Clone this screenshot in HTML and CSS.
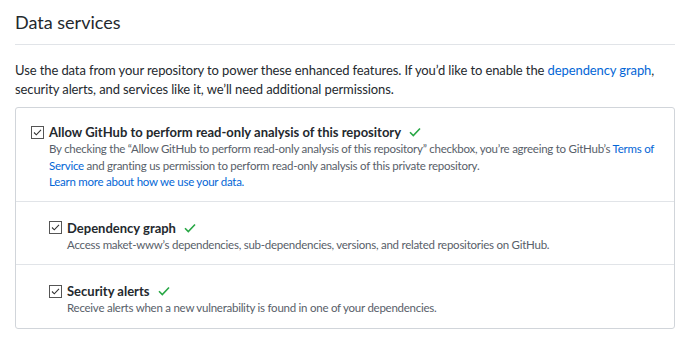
FILE: index.html
```html
<!DOCTYPE html>
<html>
<head>
<meta charset="utf-8">
<link rel="stylesheet" href="styles.css">
</head>
<body>
<div class="page">
  <h2 class="title">Data services</h2>
  <p class="intro">Use the data from your repository to power these enhanced features. If you’d like to enable the <a href="#">dependency graph</a>, security alerts, and services like it, we’ll need additional permissions.</p>
  <div class="box">
    <div class="row">
      <div class="head">
        <span class="cb"><svg width="13" height="13" viewBox="0 0 13 13"><rect x="0.5" y="0.5" width="12" height="12" fill="#fff" stroke="#555"/><path d="M3 6.5 L5.3 8.8 L10 3.8" fill="none" stroke="#333" stroke-width="1.1"/></svg></span>
        <span class="label">Allow GitHub to perform read-only analysis of this repository</span>
        <svg class="ok" width="12" height="10" viewBox="0 0 12 10"><path d="M1 5.2 L4.3 8.5 L11 1.5" fill="none" stroke="#28a745" stroke-width="1.6"/></svg>
      </div>
      <p class="desc">By checking the “Allow GitHub to perform read-only analysis of this repository” checkbox, you’re agreeing to GitHub’s <a href="#">Terms of Service</a> and granting us permission to perform read-only analysis of this private repository.<br><a href="#">Learn more about how we use your data.</a></p>
    </div>
    <div class="row sub">
      <div class="head">
        <span class="cb"><svg width="13" height="13" viewBox="0 0 13 13"><rect x="0.5" y="0.5" width="12" height="12" fill="#fff" stroke="#555"/><path d="M3 6.5 L5.3 8.8 L10 3.8" fill="none" stroke="#333" stroke-width="1.1"/></svg></span>
        <span class="label">Dependency graph</span>
        <svg class="ok" width="12" height="10" viewBox="0 0 12 10"><path d="M1 5.2 L4.3 8.5 L11 1.5" fill="none" stroke="#28a745" stroke-width="1.6"/></svg>
      </div>
      <p class="desc">Access maket-www’s dependencies, sub-dependencies, versions, and related repositories on GitHub.</p>
    </div>
    <div class="row sub">
      <div class="head">
        <span class="cb"><svg width="13" height="13" viewBox="0 0 13 13"><rect x="0.5" y="0.5" width="12" height="12" fill="#fff" stroke="#555"/><path d="M3 6.5 L5.3 8.8 L10 3.8" fill="none" stroke="#333" stroke-width="1.1"/></svg></span>
        <span class="label">Security alerts</span>
        <svg class="ok" width="12" height="10" viewBox="0 0 12 10"><path d="M1 5.2 L4.3 8.5 L11 1.5" fill="none" stroke="#28a745" stroke-width="1.6"/></svg>
      </div>
      <p class="desc">Receive alerts when a new vulnerability is found in one of your dependencies.</p>
    </div>
  </div>
</div>
</body>
</html>
```
FILE: styles.css
```css
html, body { margin: 0; padding: 0; background: #fff; }
body { font-family: Lato, "Open Sans", sans-serif; color: #24292e; }
.page { width: 660px; padding: 7px 0 0 15px; }
.title { margin: 0; font-size: 18px; font-weight: 400; line-height: 30px; padding-bottom: 7px; border-bottom: 1px solid #e1e4e8; }
.intro { margin: 16px 0 0; font-size: 13px; line-height: 19px; letter-spacing: -0.1px; }
a { color: #0366d6; text-decoration: none; }
.box { margin-top: 8px; width: 658px; border: 1px solid #d1d5da; border-radius: 3px; }
.row { padding: 17px 14px 11px 15px; border-top: 1px solid #e1e4e8; }
.row:first-child { border-top: none; padding-top: 15px; padding-bottom: 10px; }
.row.sub { padding-left: 33px; }
.head { display: flex; align-items: center; height: 18px; }
.cb { display: flex; width: 13px; height: 13px; margin-right: 5px; }
.label { font-size: 13px; font-weight: 700; }
.ok { margin-left: 8px; }
.desc { margin: 0; padding-left: 18px; font-size: 11.5px; line-height: 16.5px; color: #586069; letter-spacing: -0.25px; }
```
